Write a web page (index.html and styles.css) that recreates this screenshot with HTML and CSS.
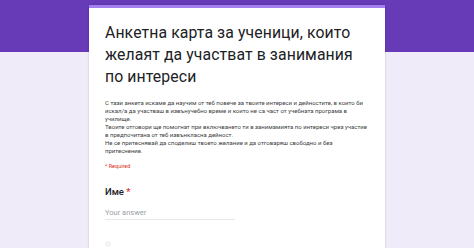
FILE: index.html
```html
<!DOCTYPE html>
<html lang="bg">
<head>
<meta charset="utf-8">
<link rel="stylesheet" href="styles.css">
</head>
<body>
<div class="header"></div>
<main class="page">
  <section class="card">
    <h1 class="title">Анкетна карта за ученици, които желаят да участват в занимания по интереси</h1>
    <p class="desc">С тази анкета искаме да научим от теб повече за твоите интереси и дейностите, в които би искал/а да участваш в извънучебно време и които не са част от учебната програма в училище.<br>Твоите отговори ще помогнат при включването ти в занимамията по интереси чрез участие в предпочитана от теб извънкласна дейност.<br>Не се притеснявай да споделиш твоето желание и да отговаряш свободно и без притеснение.</p>
    <div class="required">* Required</div>
    <div class="question">
      <div class="label">Име <span class="star">*</span></div>
      <div class="answer">Your answer</div>
    </div>
    <div class="dot"></div>
  </section>
</main>
</body>
</html>
```
FILE: styles.css
```css
html, body {
  margin: 0;
  padding: 0;
}
body {
  width: 474px;
  height: 248px;
  overflow: hidden;
  background: #efebf8;
  font-family: Roboto, "Noto Sans", Arial, sans-serif;
  position: relative;
}
.header {
  height: 52px;
  background: #673ab7;
}
.page {
  position: absolute;
  top: 5px;
  left: 0;
  right: 0;
  display: flex;
  justify-content: center;
}
.card {
  width: 296px;
  background: #fff;
  border-top: 3px solid #a37ff0;
  box-sizing: border-box;
  padding: 14px 16px 0 16px;
  height: 250px;
  box-shadow: 0 0 2px rgba(0,0,0,0.18);
}
.title {
  margin: 0;
  max-width: 252px;
  font-size: 15.8px;
  font-weight: 400;
  line-height: 22px;
  color: #202124;
  letter-spacing: 0.1px;
}
.desc {
  margin: 11px 0 0 0;
  font-size: 6px;
  line-height: 8px;
  color: #3c4043;
}
.required {
  margin-top: 8px;
  font-size: 5.5px;
  color: #d93025;
}
.question {
  margin-top: 17px;
}
.label {
  font-size: 9.5px;
  font-weight: 500;
  color: #202124;
}
.star {
  color: #d93025;
}
.answer {
  margin-top: 11px;
  width: 130px;
  font-size: 7.5px;
  color: #9aa0a6;
  padding-bottom: 2px;
  border-bottom: 1px solid #e8e8e8;
}
.dot {
  margin-top: 21px;
  width: 6px;
  height: 6px;
  border-radius: 50%;
  background: #f3f3f3;
}
```
